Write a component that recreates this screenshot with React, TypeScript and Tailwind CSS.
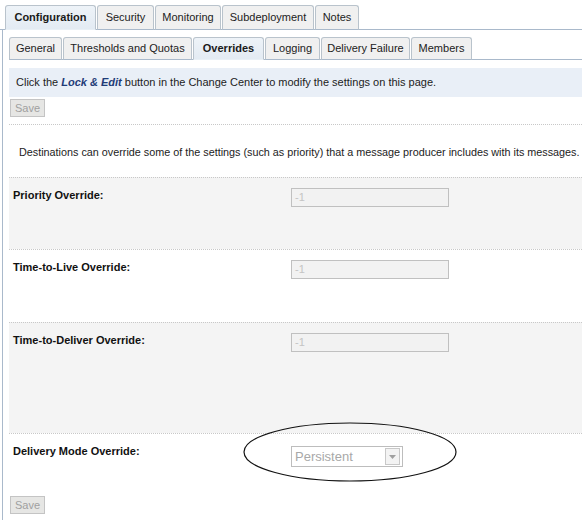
const topTabs: [string, string][] = [
  ["Configuration", "w-[91px]"],
  ["Security", "w-[57px]"],
  ["Monitoring", "w-[66px]"],
  ["Subdeployment", "w-[92px]"],
  ["Notes", "w-[44px]"],
];
const subTabs: [string, string][] = [
  ["General", "w-[53px]"],
  ["Thresholds and Quotas", "w-[129px]"],
  ["Overrides", "w-[71px]"],
  ["Logging", "w-[55px]"],
  ["Delivery Failure", "w-[89px]"],
  ["Members", "w-[61px]"],
];

const font = { fontFamily: '"Liberation Sans", Arial, sans-serif' };

const Tab = ({ label, active, width }: { label: string; active: boolean; width: string }) => (
  <div
    className={
      "relative -mb-px flex h-full items-center justify-center whitespace-nowrap rounded-t-[3px] border border-[#b9c3cc] text-[11px] " +
      width +
      (active
        ? " border-b-[#e9f0f6] bg-gradient-to-b from-[#eef3f8] to-[#e3ebf3] font-bold text-[#1a1a1a]"
        : " border-b-[#a9b9cb] bg-[#f0f0f0] text-[#222]")
    }
  >
    {label}
  </div>
);

const Row = ({
  label,
  shaded,
  height,
  children,
}: {
  label: string;
  shaded?: boolean;
  height: string;
  children: React.ReactNode;
}) => (
  <div className={"flex border-t border-dotted border-[#c8c8c8] pt-[10px] " + height + (shaded ? " bg-[#f4f4f4]" : " bg-white")}>
    <div className="-mt-[1px] w-[282px] pl-[4px] text-[11px] font-bold text-[#111]">{label}</div>
    <div>{children}</div>
  </div>
);

const Field = () => (
  <div className="flex h-[19px] w-[158px] items-center border border-[#c0c0c0] bg-[#f2f2f2] pl-[3px] text-[11px] text-[#c4c4c4]">
    -1
  </div>
);

const SaveButton = () => (
  <div className="flex h-[18px] w-[35px] items-center justify-center border border-[#c4c4c4] bg-[#e6e6e4] text-[11px] text-[#a0a0a0]">
    Save
  </div>
);

export default function App() {
  return (
    <div className="relative h-[520px] w-[582px] overflow-hidden bg-white" style={font}>
      {/* top tabs */}
      <div className="flex h-[30px] items-end gap-[1px] border-b border-[#a9b9cb] pl-[5px] pt-[4px]">
        {topTabs.map(([t, w]) => (
          <Tab key={t} label={t} width={w} active={t === "Configuration"} />
        ))}
      </div>

      <div className="ml-[2px] h-[490px] border-l border-[#a9b9cb]">
        {/* sub tabs */}
        <div className="ml-[6px] flex h-[30px] items-end gap-[1px] border-b border-[#a9b9cb] pt-[6px]">
          {subTabs.map(([t, w]) => (
            <Tab key={t} label={t} width={w} active={t === "Overrides"} />
          ))}
        </div>

        <div className="pl-[6px]">
          <div className="mt-[8px] flex h-[29px] items-center bg-[#e9eff7] pl-[7px] text-[11px] text-[#1c1c1c]">
            Click the&nbsp;
            <span className="font-bold italic text-[#1f3c78]">Lock &amp; Edit</span>
            &nbsp;button in the Change Center to modify the settings on this page.
          </div>

          <div className="ml-px mt-[2px]">
            <SaveButton />
          </div>

          <div className="mt-[7px] h-[53px] border-t border-dotted border-[#c8c8c8] pl-[10px] pt-[19px] text-[10.8px] whitespace-nowrap text-[#1c1c1c]">
            Destinations can override some of the settings (such as priority) that a message producer includes with its messages.
          </div>

          <Row label="Priority Override:" shaded height="h-[72px]">
            <Field />
          </Row>
          <Row label="Time-to-Live Override:" height="h-[73px]">
            <Field />
          </Row>
          <Row label="Time-to-Deliver Override:" shaded height="h-[111px]">
            <Field />
          </Row>
          <Row label="Delivery Mode Override:" height="h-[55px]">
            <div className="mt-[2px] flex h-[21px] w-[112px] items-center justify-between border border-[#bdbdbd] bg-white pl-[3px] pr-[2px] text-[13px] text-[#a8a8a8]">
              <span>Persistent</span>
              <span className="flex h-[17px] w-[15px] items-center justify-center border border-[#c8c8c8] bg-[#f3f3f3]">
                <svg width="7" height="4" viewBox="0 0 7 4">
                  <path d="M0 0h7L3.5 4z" fill="#a0a0a0" />
                </svg>
              </span>
            </div>
          </Row>

          <div className="ml-px mt-[8px]">
            <SaveButton />
          </div>
        </div>
      </div>

      {/* hand-drawn ellipse marking the field */}
      <svg className="pointer-events-none absolute left-[240px] top-[420px]" width="222" height="66" viewBox="0 0 222 66">
        <ellipse cx="110" cy="32" rx="106" ry="29" fill="none" stroke="#111" strokeWidth="1.2" />
      </svg>
    </div>
  );
}
